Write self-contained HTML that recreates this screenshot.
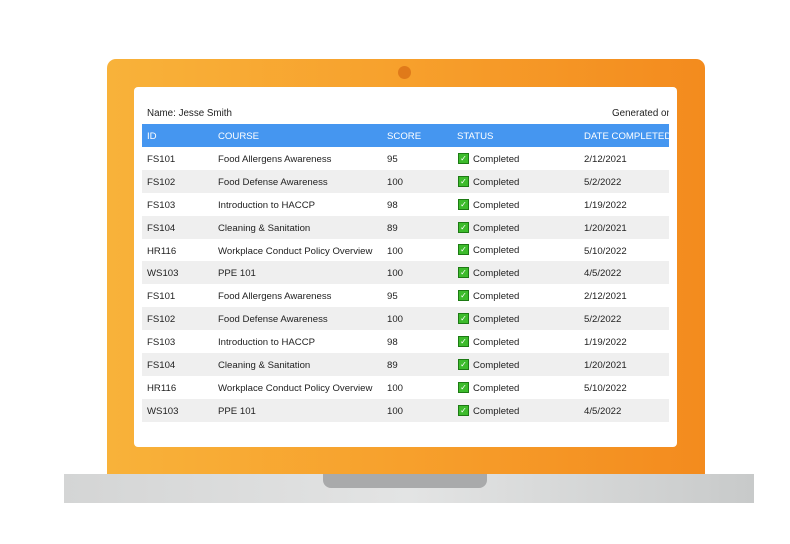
<!DOCTYPE html>
<html><head><style>
body{margin:0;width:790px;height:544px;background:#fff;position:relative;overflow:hidden;font-family:"Liberation Sans",sans-serif;}
.frame{position:absolute;left:107px;top:59px;width:598px;height:416px;border-radius:9px 9px 0 0;background:linear-gradient(90deg,#f8b23a,#f7a02c 50%,#f38b1e);}
.cam{position:absolute;left:398px;top:66px;width:13px;height:13px;border-radius:50%;background:#e07a1a;}
.screen{position:absolute;left:134px;top:87px;width:543px;height:360px;background:#fff;border-radius:4px;}
.base{position:absolute;left:64px;top:474px;width:690px;height:29px;background:linear-gradient(90deg,#d4d5d5,#e3e4e4 50%,#c8caca);}
.notch{position:absolute;left:323px;top:474px;width:164px;height:14px;background:#a9aaab;border-radius:0 0 8px 8px;}
.name{position:absolute;left:147px;top:108px;font-size:9.8px;color:#222;}
.gen{position:absolute;left:612px;top:108px;font-size:9.8px;color:#222;width:57px;overflow:hidden;white-space:nowrap;}
table{position:absolute;left:142px;top:124px;width:527px;border-collapse:collapse;font-size:9.6px;color:#222;table-layout:fixed;}
th{background:#4596f0;color:#fff;font-weight:normal;text-align:left;height:23px;padding:2px 0 0;white-space:nowrap;overflow:hidden;box-sizing:border-box;}
td{height:22.9px;padding:2px 0 0;white-space:nowrap;vertical-align:middle;box-sizing:border-box;}
tr:nth-child(odd) td{background:#efefef;}
td:first-child,th:first-child{padding-left:5px;}
.cb{display:inline-block;box-sizing:border-box;width:11px;height:11px;background:#3dbb2c;border:1px solid #1d7a14;vertical-align:middle;margin:0 4px 0 1px;color:#fff;font-size:8px;line-height:9px;text-align:center;position:relative;top:-1px;}
</style></head><body>
<div class="frame"></div><div class="cam"></div>
<div class="screen"></div>
<div class="base"></div><div class="notch"></div>
<div class="name">Name: Jesse Smith</div><div class="gen">Generated on</div>
<table>
<colgroup><col style="width:76px"><col style="width:169px"><col style="width:70px"><col style="width:127px"><col></colgroup>
<tr><th>ID</th><th>COURSE</th><th>SCORE</th><th>STATUS</th><th>DATE COMPLETED</th></tr>
<tr><td>FS101</td><td>Food Allergens Awareness</td><td>95</td><td><span class="cb">✓</span>Completed</td><td>2/12/2021</td></tr>
<tr><td>FS102</td><td>Food Defense Awareness</td><td>100</td><td><span class="cb">✓</span>Completed</td><td>5/2/2022</td></tr>
<tr><td>FS103</td><td>Introduction to HACCP</td><td>98</td><td><span class="cb">✓</span>Completed</td><td>1/19/2022</td></tr>
<tr><td>FS104</td><td>Cleaning &amp; Sanitation</td><td>89</td><td><span class="cb">✓</span>Completed</td><td>1/20/2021</td></tr>
<tr><td>HR116</td><td>Workplace Conduct Policy Overview</td><td>100</td><td><span class="cb">✓</span>Completed</td><td>5/10/2022</td></tr>
<tr><td>WS103</td><td>PPE 101</td><td>100</td><td><span class="cb">✓</span>Completed</td><td>4/5/2022</td></tr>
<tr><td>FS101</td><td>Food Allergens Awareness</td><td>95</td><td><span class="cb">✓</span>Completed</td><td>2/12/2021</td></tr>
<tr><td>FS102</td><td>Food Defense Awareness</td><td>100</td><td><span class="cb">✓</span>Completed</td><td>5/2/2022</td></tr>
<tr><td>FS103</td><td>Introduction to HACCP</td><td>98</td><td><span class="cb">✓</span>Completed</td><td>1/19/2022</td></tr>
<tr><td>FS104</td><td>Cleaning &amp; Sanitation</td><td>89</td><td><span class="cb">✓</span>Completed</td><td>1/20/2021</td></tr>
<tr><td>HR116</td><td>Workplace Conduct Policy Overview</td><td>100</td><td><span class="cb">✓</span>Completed</td><td>5/10/2022</td></tr>
<tr><td>WS103</td><td>PPE 101</td><td>100</td><td><span class="cb">✓</span>Completed</td><td>4/5/2022</td></tr>
</table>
</body></html>
